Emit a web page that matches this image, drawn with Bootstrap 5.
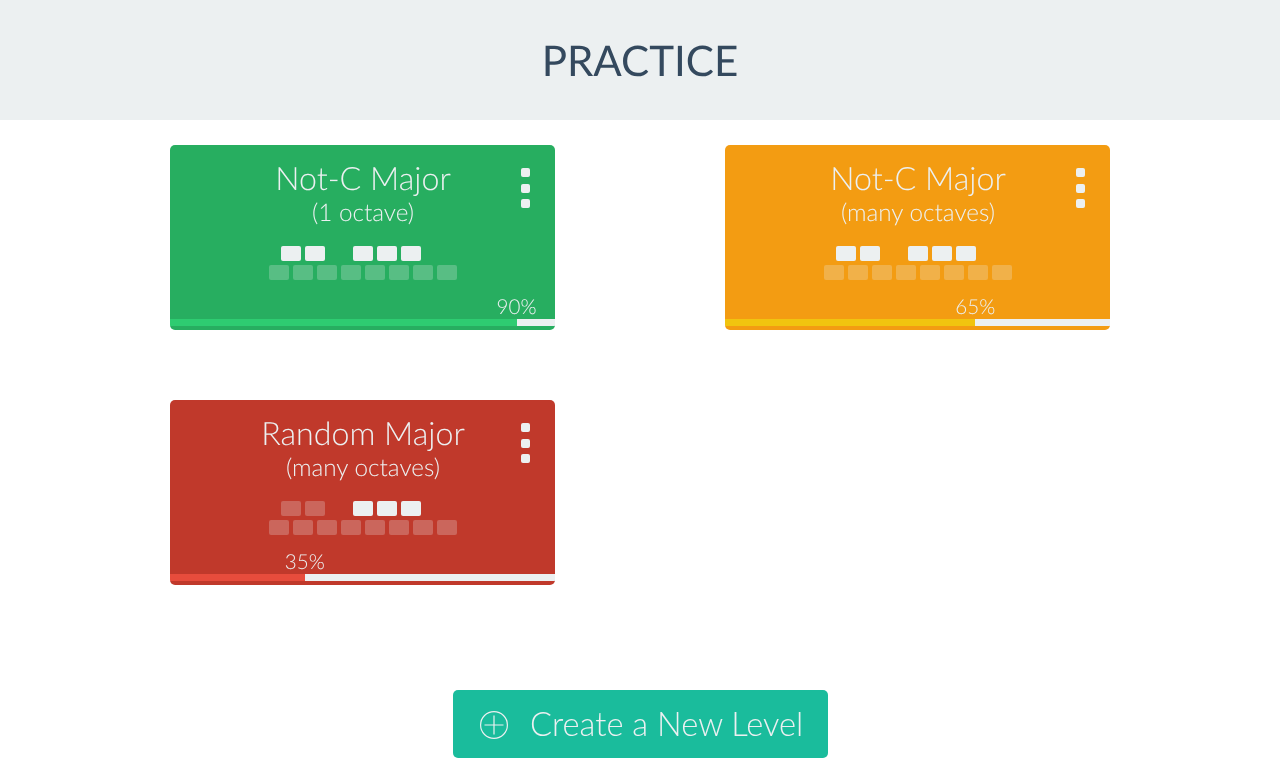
<!DOCTYPE html>
<html lang="en">
<head>
<meta charset="utf-8">
<title>Practice</title>
<link href="https://cdn.jsdelivr.net/npm/bootstrap@5.3.0/dist/css/bootstrap.min.css" rel="stylesheet">
<style>
html, body { height: 100%; overflow: hidden; }
body { font-family: Lato, "Liberation Sans", sans-serif; background: #fff; text-rendering: geometricPrecision; }
.page-head { height: 120px; background: #ecf0f1; color: #34495e; }
.page-head h1 { font-size: 42.1px; font-weight: 400; margin: 0; line-height: 42px; will-change: opacity; }
.level-grid { display: grid; grid-template-columns: 385px 385px; justify-content: space-between; row-gap: 70px; width: 940px; margin: 25px auto 0; }
.level-card { height: 185px; border: 0; border-radius: 5px; color: #ecf0f1; overflow: hidden; font-weight: 300; }
.tone-green { background: #27ae60; --fill: #2ecc71; }
.tone-orange { background: #f39c12; --fill: #f1c40f; }
.tone-red { background: #c0392b; --fill: #e74c3c; }
.level-title { font-size: 32.2px; line-height: 41px; margin-top: 12px; padding-left: 1px; font-weight: 300; will-change: opacity; }
.level-sub { font-size: 24.3px; line-height: 28px; margin-top: 1px; padding-left: 1px; will-change: opacity; }
.dots { position: absolute; left: 351px; top: 23px; gap: 6.5px; }
.dots span { width: 9px; height: 9px; border-radius: 2px; background: #ecf0f1; display: block; }
.keys { gap: 4px; height: 15px; }
.keys i { width: 20px; height: 15px; border-radius: 2px; background: #ecf0f1; display: block; }
.keys i.dim { opacity: .25; }
.keys i.gap { visibility: hidden; }
.keys-top { margin-top: 19px; }
.keys-bot { margin-top: 4px; }
.bar-wrap { position: absolute; left: 0; right: 0; top: 174px; }
.level-bar { height: 7px; border-radius: 0; background: #ecf0f1; }
.level-bar .progress-bar { background: var(--fill); }
.pct { position: absolute; bottom: 7px; transform: translateX(-50%); font-size: 20.6px; line-height: 24px; font-weight: 300; color: #ecf0f1; will-change: opacity; }
.new-wrap { margin-top: 105px; }
.new-btn { width: 375px; height: 68px; background: #1abc9c; border: 0; border-radius: 5px; color: #ecf0f1; font-size: 32.7px; font-weight: 300; padding: 0 0 0 27px; gap: 22.5px; }
.new-btn:hover { background: #1abc9c; color: #ecf0f1; }
.new-btn svg { margin-top: 2px; }
.new-btn span { will-change: opacity; }
</style>
</head>
<body>
<header class="page-head d-flex align-items-center justify-content-center">
  <h1>PRACTICE</h1>
</header>
<main class="level-grid">
  <div class="card level-card tone-green text-center position-relative">
    <div class="level-title">Not-C Major</div>
    <div class="level-sub">(1 octave)</div>
    <div class="dots d-flex flex-column"><span></span><span></span><span></span></div>
    <div class="keys keys-top d-flex justify-content-center"><i></i><i></i><i class="gap"></i><i></i><i></i><i></i><i class="gap"></i></div>
    <div class="keys keys-bot d-flex justify-content-center"><i class="dim"></i><i class="dim"></i><i class="dim"></i><i class="dim"></i><i class="dim"></i><i class="dim"></i><i class="dim"></i><i class="dim"></i></div>
    <div class="bar-wrap">
      <span class="pct" style="left:90%">90%</span>
      <div class="progress level-bar"><div class="progress-bar" style="width:90%"></div></div>
    </div>
  </div>
  <div class="card level-card tone-orange text-center position-relative">
    <div class="level-title">Not-C Major</div>
    <div class="level-sub">(many octaves)</div>
    <div class="dots d-flex flex-column"><span></span><span></span><span></span></div>
    <div class="keys keys-top d-flex justify-content-center"><i></i><i></i><i class="gap"></i><i></i><i></i><i></i><i class="gap"></i></div>
    <div class="keys keys-bot d-flex justify-content-center"><i class="dim"></i><i class="dim"></i><i class="dim"></i><i class="dim"></i><i class="dim"></i><i class="dim"></i><i class="dim"></i><i class="dim"></i></div>
    <div class="bar-wrap">
      <span class="pct" style="left:65%">65%</span>
      <div class="progress level-bar"><div class="progress-bar" style="width:65%"></div></div>
    </div>
  </div>
  <div class="card level-card tone-red text-center position-relative">
    <div class="level-title">Random Major</div>
    <div class="level-sub">(many octaves)</div>
    <div class="dots d-flex flex-column"><span></span><span></span><span></span></div>
    <div class="keys keys-top d-flex justify-content-center"><i class="dim"></i><i class="dim"></i><i class="gap"></i><i></i><i></i><i></i><i class="gap"></i></div>
    <div class="keys keys-bot d-flex justify-content-center"><i class="dim"></i><i class="dim"></i><i class="dim"></i><i class="dim"></i><i class="dim"></i><i class="dim"></i><i class="dim"></i><i class="dim"></i></div>
    <div class="bar-wrap">
      <span class="pct" style="left:35%">35%</span>
      <div class="progress level-bar"><div class="progress-bar" style="width:35%"></div></div>
    </div>
  </div>
</main>
<div class="new-wrap d-flex justify-content-center">
  <button type="button" class="btn new-btn d-flex align-items-center">
    <svg width="28" height="28" viewBox="0 0 28 28" fill="none" stroke="#ecf0f1" stroke-width="1.2" aria-hidden="true"><circle cx="14" cy="14" r="13.4"/><path d="M14 4.5v19M4.5 14h19"/></svg>
    <span>Create a New Level</span>
  </button>
</div>
<script src="https://cdn.jsdelivr.net/npm/bootstrap@5.3.0/dist/js/bootstrap.bundle.min.js"></script>
</body>
</html>
